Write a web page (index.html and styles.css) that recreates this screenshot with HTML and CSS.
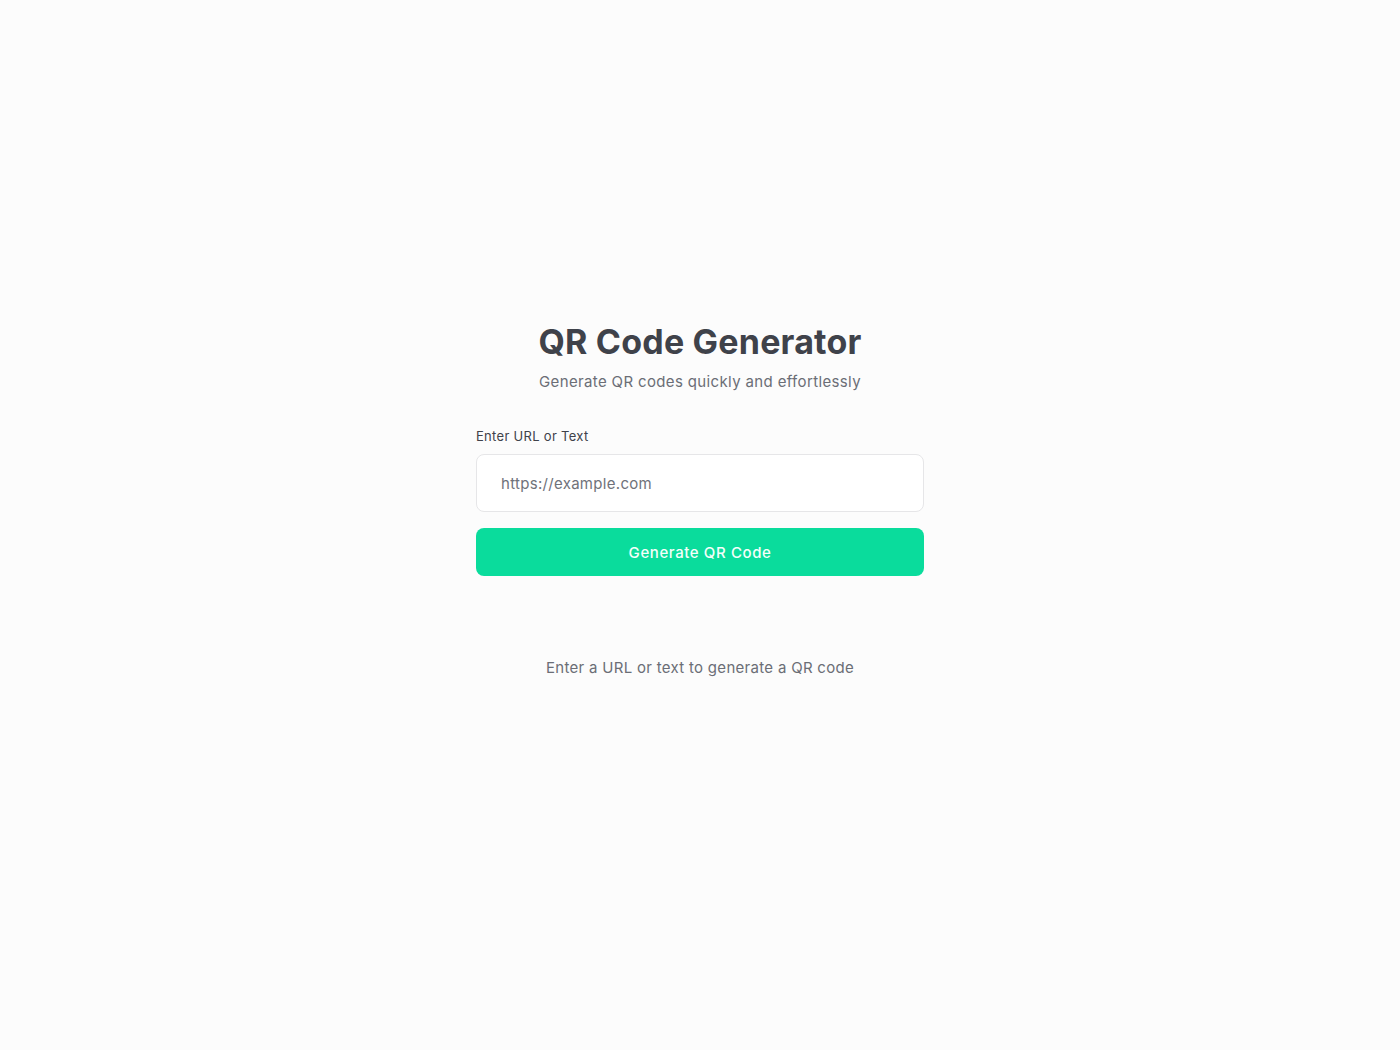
FILE: index.html
```html
<!DOCTYPE html>
<html lang="en">
<head>
<meta charset="utf-8">
<title>QR Code Generator</title>
<link rel="stylesheet" href="styles.css">
</head>
<body>
<main class="page">
  <section class="card">
    <header class="head">
      <h1 class="title">QR Code Generator</h1>
      <p class="subtitle">Generate QR codes quickly and effortlessly</p>
    </header>
    <form class="form">
      <label class="label" for="qr-input">Enter URL or Text</label>
      <input id="qr-input" class="input" type="text" placeholder="https://example.com">
      <button type="button" class="button">Generate QR Code</button>
    </form>
    <p class="hint">Enter a URL or text to generate a QR code</p>
  </section>
</main>
</body>
</html>
```

FILE: styles.css
```css
* { box-sizing: border-box; }
html, body { margin: 0; padding: 0; }
body {
  background: #fcfcfc;
  font-family: Inter, "Noto Sans", sans-serif;
  color: #40434b;
  min-height: 1050px;
}
.page {
  display: flex;
  justify-content: center;
  padding-top: 319px;
}
.card {
  width: 448px;
  display: flex;
  flex-direction: column;
}
.head {
  text-align: center;
  display: flex;
  flex-direction: column;
  gap: 6px;
}
.title {
  margin: 0;
  font-size: 34px;
  line-height: 46px;
  font-weight: 700;
  letter-spacing: 0.2px;
  color: #3f424a;
}
.subtitle {
  margin: 0;
  font-size: 15px;
  line-height: 22px;
  letter-spacing: 0.36px;
  color: #6b6e76;
}
.form {
  display: flex;
  flex-direction: column;
  margin-top: 33px;
}
.label {
  font-size: 13px;
  line-height: 20px;
  letter-spacing: 0.3px;
  color: #3f424a;
  margin-bottom: 8px;
}
.input {
  height: 58px;
  border: 1px solid #e6e6e8;
  border-radius: 8px;
  background: #ffffff;
  padding: 0 24px;
  font-family: inherit;
  font-size: 15px;
  letter-spacing: 0.3px;
  color: #40434b;
  outline: none;
}
.input::placeholder { color: #6f727a; }
.button {
  margin-top: 16px;
  height: 48px;
  border: none;
  border-radius: 8px;
  background: #0adc9c;
  color: #f4fffa;
  font-family: inherit;
  font-size: 15px;
  font-weight: 500;
  letter-spacing: 0.6px;
  padding-bottom: 1px;
}
.hint {
  margin: 81px 0 0;
  text-align: center;
  font-size: 15px;
  line-height: 22px;
  letter-spacing: 0.3px;
  color: #6b6e76;
}
```
